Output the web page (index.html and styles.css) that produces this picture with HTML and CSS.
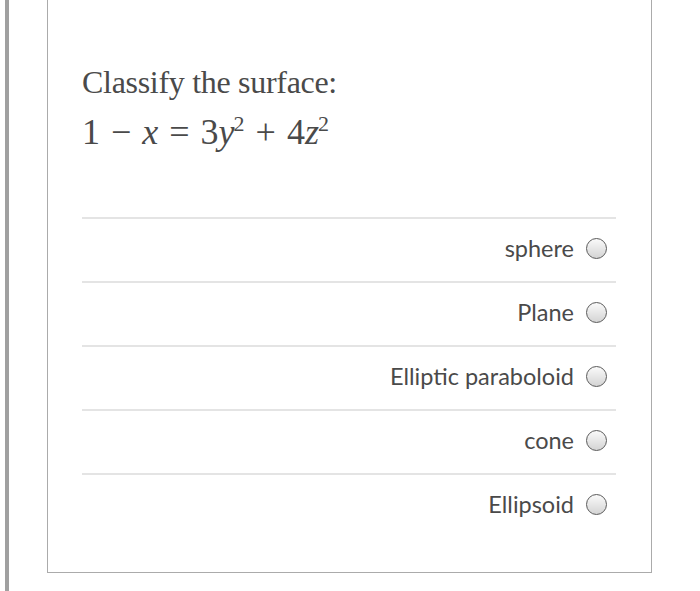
FILE: index.html
```html
<!DOCTYPE html>
<html lang="en">
<head>
<meta charset="utf-8">
<title>Classify the surface</title>
<link rel="stylesheet" href="styles.css">
</head>
<body>
<div class="rail"></div>
<div class="card">
  <div class="question">
    <p class="prompt">Classify the surface:</p>
    <p class="equation"><span class="mn">1</span><span class="mo">−</span><span class="mi">x</span><span class="mo">=</span><span class="mn">3</span><span class="mi">y</span><sup class="sup">2</sup><span class="mo">+</span><span class="mn">4</span><span class="mi">z</span><sup class="sup">2</sup></p>
  </div>
  <ul class="options">
    <li class="option"><span class="label">sphere</span><span class="radio"></span></li>
    <li class="option"><span class="label">Plane</span><span class="radio"></span></li>
    <li class="option"><span class="label">Elliptic paraboloid</span><span class="radio"></span></li>
    <li class="option"><span class="label">cone</span><span class="radio"></span></li>
    <li class="option"><span class="label">Ellipsoid</span><span class="radio"></span></li>
  </ul>
</div>
</body>
</html>
```

FILE: styles.css
```css
html, body {
  margin: 0;
  padding: 0;
  background: #fff;
}
body {
  display: flex;
  align-items: flex-start;
  min-height: 591px;
}
.rail {
  width: 4px;
  margin-left: 5px;
  align-self: stretch;
  background: #a0a0a0;
}
.card {
  margin-left: 38px;
  width: 605px;
  border: 1px solid #ababab;
  border-top: none;
  padding: 0 35px 35px 34px;
  box-sizing: border-box;
}
.question {
  padding-top: 62px;
  padding-bottom: 60px;
  color: #4a4a4a;
  font-family: "Liberation Serif", "Times New Roman", serif;
}
.prompt {
  margin: 0;
  font-size: 32px;
  line-height: 40px;
  letter-spacing: -0.3px;
}
.equation {
  margin: 10px 0 0;
  font-size: 36px;
  line-height: 40px;
  white-space: nowrap;
}
.mi {
  font-style: italic;
}
.mo {
  margin: 0 11px;
}
.sup {
  font-size: 22px;
  vertical-align: 0;
  position: relative;
  top: -13px;
  margin-left: -1px;
}
.options {
  list-style: none;
  margin: 0;
  padding: 0;
}
.option {
  display: flex;
  justify-content: flex-end;
  align-items: center;
  gap: 12px;
  height: 64px;
  box-sizing: border-box;
  border-top: 2px solid #e4e4e4;
  padding: 0 9px 4px 0;
  font-family: Lato, "Open Sans", sans-serif;
  font-size: 23.5px;
  color: #4a4a4a;
}
.radio {
  width: 21px;
  height: 21px;
  border-radius: 50%;
  border: 1.5px solid #5a5a5a;
  box-sizing: border-box;
  background: linear-gradient(#fafafa, #d4d4d4);
  flex: none;
}
```
